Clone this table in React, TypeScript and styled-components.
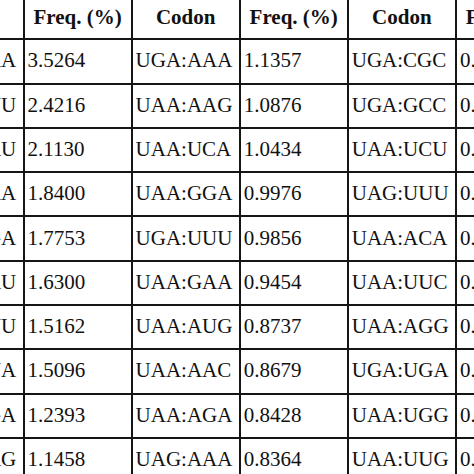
import React from "react";
import styled, { createGlobalStyle } from "styled-components";

const Global = createGlobalStyle`
  html, body {
    margin: 0;
    padding: 0;
    width: 474px;
    height: 474px;
    overflow: hidden;
    background: #ffffff;
  }
`;

const Viewport = styled.div`
  width: 474px;
  height: 474px;
  overflow: hidden;
  background: #ffffff;
`;

const Table = styled.div`
  display: grid;
  grid-template-columns: repeat(6, 106.1px);
  grid-auto-rows: 42.3px;
  gap: 2px;
  padding: 2px;
  background: #151515;
  width: max-content;
  margin: -6px 0 0 -85.6px;
  font-family: "Liberation Serif", "Times New Roman", serif;
  font-size: 21px;
  color: #111111;
`;

const Cell = styled.div<{ $head?: boolean }>`
  background: #ffffff;
  display: flex;
  align-items: center;
  justify-content: ${(p) => (p.$head ? "center" : "flex-start")};
  padding: ${(p) => (p.$head ? "0" : "0 0 2px 3px")};
  font-weight: ${(p) => (p.$head ? 700 : 400)};
  white-space: nowrap;
  overflow: hidden;
  line-height: 1.15;
`;

const headers = ["Codon", "Freq. (%)", "Codon", "Freq. (%)", "Codon", "Freq. (%)"];

const rows: string[][] = [
  ["UAA:AAA", "3.5264", "UGA:AAA", "1.1357", "UGA:CGC", "0.8223"],
  ["UAA:UUU", "2.4216", "UAA:AAG", "1.0876", "UGA:GCC", "0.8098"],
  ["UGA:AAU", "2.1130", "UAA:UCA", "1.0434", "UAA:UCU", "0.7994"],
  ["UAA:GAA", "1.8400", "UAA:GGA", "0.9976", "UAG:UUU", "0.7913"],
  ["UAA:UGA", "1.7753", "UGA:UUU", "0.9856", "UAA:ACA", "0.7856"],
  ["UGA:AAU", "1.6300", "UAA:GAA", "0.9454", "UAA:UUC", "0.7725"],
  ["UAA:AUU", "1.5162", "UAA:AUG", "0.8737", "UAA:AGG", "0.7648"],
  ["UAA:AUA", "1.5096", "UAA:AAC", "0.8679", "UGA:UGA", "0.7552"],
  ["UAA:GGA", "1.2393", "UAA:AGA", "0.8428", "UAA:UGG", "0.7461"],
  ["UAA:AAG", "1.1458", "UAG:AAA", "0.8364", "UAA:UUG", "0.7398"],
];

export default function App() {
  return (
    <Viewport>
      <Global />
      <Table>
        {headers.map((h, i) => (
          <Cell key={`h${i}`} $head>
            {h}
          </Cell>
        ))}
        {rows.map((r, ri) =>
          r.map((c, ci) => <Cell key={`${ri}-${ci}`}>{c}</Cell>)
        )}
      </Table>
    </Viewport>
  );
}
